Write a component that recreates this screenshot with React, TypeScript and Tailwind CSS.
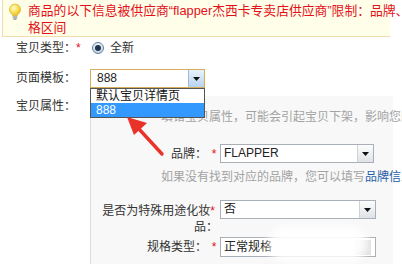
import React from 'react';

const font = "font-['Liberation_Sans','Noto_Sans_CJK_SC',sans-serif]";

function Caret({ active = false }: { active?: boolean }) {
  return (
    <div
      className={`flex h-full w-[16px] items-center justify-center border-l ${
        active ? 'border-[#9fb9d6] bg-gradient-to-b from-[#e8f2fc] to-[#b9d3ee]' : 'border-[#cfd3d8] bg-gradient-to-b from-[#fdfdfd] to-[#dfe2e6]'
      }`}
    >
      <svg width="7" height="4" viewBox="0 0 7 4">
        <path d="M0 0h7L3.5 4z" fill="#111" />
      </svg>
    </div>
  );
}

function Select({ value, width, focused = false }: { value: string; width: string; focused?: boolean }) {
  return (
    <div
      className={`flex h-[19px] ${width} items-stretch border bg-white ${
        focused ? 'border-[#d4ae5c]' : 'border-[#a9afb6]'
      }`}
    >
      <span className={`flex-1 text-[12px] leading-[17px] text-[#222] ${focused ? 'pl-[6px]' : 'pl-[3px]'}`}>{value}</span>
      <Caret active={focused} />
    </div>
  );
}

function Star() {
  return <span className="text-[12px] text-[#e3101a]">*</span>;
}

export default function App() {
  return (
    <div className={`relative h-[265px] w-[402px] overflow-hidden bg-white ${font}`}>
      {/* notice */}
      <div className="ml-[2px] flex h-[37px] w-[388px] border-b border-l border-[#f1dcae] bg-[#fffee9]">
        <svg className="ml-[5px] mt-[3px] shrink-0" width="14" height="17" viewBox="0 0 14 17">
          <defs>
            <radialGradient id="bulb" cx="0.4" cy="0.35" r="0.7">
              <stop offset="0" stopColor="#fffbd0" />
              <stop offset="0.6" stopColor="#f8dc4a" />
              <stop offset="1" stopColor="#e3b51c" />
            </radialGradient>
          </defs>
          <path d="M7 1a5.5 5.5 0 0 0-3.2 10c.6.5.9 1 .9 1.6h4.6c0-.6.3-1.1.9-1.6A5.5 5.5 0 0 0 7 1z" fill="url(#bulb)" stroke="#d9a91a" strokeWidth="0.6" />
          <rect x="4.6" y="12.8" width="4.8" height="1.4" fill="#b8b8b8" />
          <rect x="4.9" y="14.3" width="4.2" height="1.3" fill="#9a9a9a" />
          <rect x="5.6" y="15.7" width="2.8" height="1" fill="#888" />
        </svg>
        <div className="ml-[6px] whitespace-nowrap pt-[2px] text-[12.8px] leading-[17px] text-[#e3101a]">
          商品的以下信息被供应商“flapper杰西卡专卖店供应商”限制：品牌、类目、价
          <br />
          格区间
        </div>
      </div>

      {/* form */}
      <div className="grid grid-cols-[74px_1fr] text-[12px] text-[#333]">
        <div className="whitespace-nowrap pl-[16px] leading-[22px]">宝贝类型：</div>
        <div className="flex h-[22px] items-center">
          <span className="ml-[2px] w-[8px]">
            <Star />
          </span>
          <span className="ml-[8px] flex h-[12px] w-[12px] items-center justify-center rounded-full border border-[#5d7ea6] bg-gradient-to-b from-[#eef3f8] to-[#c6d3e0]">
            <span className="h-[6px] w-[6px] rounded-full bg-[#22364f]" />
          </span>
          <span className="ml-[6px]">全新</span>
        </div>

        <div className="whitespace-nowrap pl-[16px] pt-[11px] leading-[17px]">页面模板：</div>
        <div className="pt-[10px] pb-[8px]">
          <div className="ml-[16px]">
            <Select value="888" width="w-[115px]" focused />
          </div>
        </div>

        <div className="whitespace-nowrap pl-[16px] pt-[2px] leading-[16px]">宝贝属性：</div>
        <div className="ml-[16px] h-[168px] w-[303px] border-l border-[#dcdcdc] bg-[#f8f8f8] pt-[13px]">
          <div className="whitespace-nowrap pl-[70px] leading-[16px] text-[#a3a3a3]">
            填错宝贝属性，可能会引起宝贝下架，影响您的正常销售
          </div>

          <div className="mt-[19px] flex items-center">
            <div className="w-[117px] pr-[1px] text-right">品牌：</div>
            <span className="w-[12px] text-center">
              <Star />
            </span>
            <Select value="FLAPPER" width="w-[154px]" />
          </div>

          <div className="mt-[6px] whitespace-nowrap pl-[70px] leading-[16px] text-[#a3a3a3]">
            如果没有找到对应的品牌，您可以填写<span className="text-[#1f5ea8]">品牌信息</span>
          </div>

          <div className="mt-[15px] flex items-start">
            <div className="w-[129px] whitespace-nowrap pr-[5px] pt-[3px] text-right leading-[16px]">
              是否为特殊用途化妆<Star />
              <br />
              <span className="-mr-[3px]">品：</span>
            </div>
            <Select value="否" width="w-[156px]" />
          </div>

          <div className="mt-[2px] flex items-center">
            <div className="w-[117px] pr-[1px] text-right">规格类型：</div>
            <span className="w-[12px] text-center">
              <Star />
            </span>
            <div className="relative flex h-[20px] w-[156px] items-center border border-[#a9afb6] bg-white pl-[3px] text-[#222]">
              正常规格
              <div className="absolute right-[4px] top-[2px] h-[15px] w-[16px] bg-[#dedede]" />
            </div>
          </div>
        </div>
      </div>

      {/* open dropdown list */}
      <div className="absolute left-[90px] top-[88px] w-[115px] border border-[#555] bg-white text-[12px] leading-[14px]">
        <div className="pl-[5px] text-[#111]">默认宝贝详情页</div>
        <div className="bg-[#3399ff] pl-[5px] text-white">888</div>
      </div>

      {/* watermark smudge */}
      <div className="pointer-events-none absolute left-[268px] top-[226px] h-[36px] w-[100px] rounded-[18px] bg-white/90 blur-[4px]" />

      {/* red arrow */}
      <svg className="pointer-events-none absolute left-0 top-0" width="402" height="265" viewBox="0 0 402 265">
        <path d="M162 154 L139 129" stroke="#e8322a" strokeWidth="3.4" strokeLinecap="round" />
        <path d="M127 117 L147 123 L134 135 Z" fill="#e8322a" />
      </svg>
    </div>
  );
}
